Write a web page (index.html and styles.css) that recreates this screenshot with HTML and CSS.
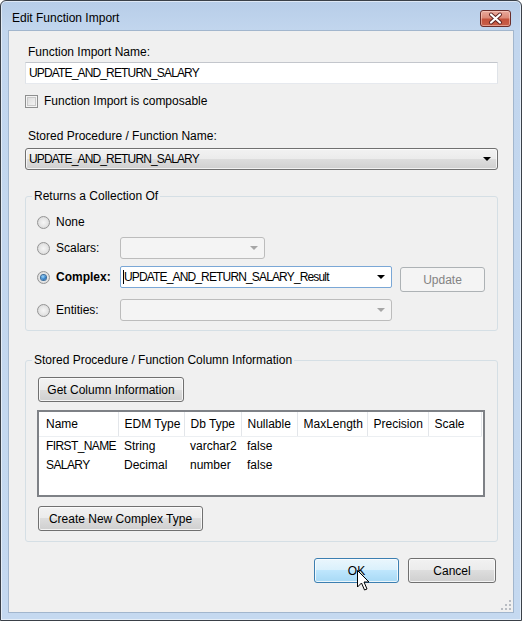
FILE: index.html
```html
<!DOCTYPE html>
<html>
<head>
<meta charset="utf-8">
<title>Edit Function Import</title>
<link rel="stylesheet" href="styles.css">
</head>
<body>
<div class="window">
  <div class="titlebar">
    <span class="title">Edit Function Import</span>
    <span class="close">
      <svg width="31" height="17" viewBox="0 0 31 17">
        <path d="M11 4.5 L20 12.5 M20 4.5 L11 12.5" stroke="#5a2220" stroke-width="4" stroke-linecap="round"/>
        <path d="M11 4.5 L20 12.5 M20 4.5 L11 12.5" stroke="#ffffff" stroke-width="2.2" stroke-linecap="round"/>
      </svg>
    </span>
  </div>
  <div class="panel">
    <div class="label first">Function Import Name:</div>
    <div class="textbox"><span class="caps">UPDATE_AND_RETURN_SALARY</span></div>
    <div class="check-row"><span class="checkbox"></span><span>Function Import is composable</span></div>
    <div class="label second">Stored Procedure / Function Name:</div>
    <div class="combo"><span class="caps">UPDATE_AND_RETURN_SALARY</span><span class="arrow"></span></div>

    <fieldset class="group returns">
      <legend>Returns a Collection Of</legend>
      <div class="radio-grid">
        <div class="opt none"><span class="radio"></span><span>None</span></div>
        <div class="spacer"></div>
        <div class="spacer"></div>

        <div class="opt"><span class="radio"></span><span>Scalars:</span></div>
        <div class="dcombo short"><span class="arrow grey"></span></div>
        <div class="spacer"></div>

        <div class="opt"><span class="radio checked"></span><span class="bold">Complex:</span></div>
        <div class="ecombo"><span class="caret"></span><span class="caps">UPDATE_AND_RETURN_SALARY_Result</span><span class="arrow"></span></div>
        <div class="btn disabled update">Update</div>

        <div class="opt"><span class="radio"></span><span>Entities:</span></div>
        <div class="dcombo"><span class="arrow grey"></span></div>
        <div class="spacer"></div>
      </div>
    </fieldset>

    <fieldset class="group columns">
      <legend>Stored Procedure / Function Column Information</legend>
      <div class="btn get">Get Column Information</div>
      <div class="listview">
        <table>
          <thead>
            <tr>
              <th class="c1">Name</th><th class="c2">EDM Type</th><th class="c3">Db Type</th><th class="c4">Nullable</th><th class="c5">MaxLength</th><th class="c6">Precision</th><th class="c7">Scale</th>
            </tr>
          </thead>
          <tbody>
            <tr><td class="c1"><span class="caps2">FIRST_NAME</span></td><td>String</td><td>varchar2</td><td>false</td><td></td><td></td><td></td></tr>
            <tr><td class="c1"><span class="caps2">SALARY</span></td><td>Decimal</td><td>number</td><td>false</td><td></td><td></td><td></td></tr>
          </tbody>
        </table>
      </div>
      <div class="btn create">Create New Complex Type</div>
    </fieldset>

    <div class="actions">
      <div class="btn ok">OK</div>
      <div class="btn cancel">Cancel</div>
    </div>

    <svg class="grip" width="10" height="10" viewBox="0 0 10 10">
      <g fill="#b8bcc2">
        <rect x="8" y="0" width="2" height="2"/>
        <rect x="4" y="4" width="2" height="2"/><rect x="8" y="4" width="2" height="2"/>
        <rect x="0" y="8" width="2" height="2"/><rect x="4" y="8" width="2" height="2"/><rect x="8" y="8" width="2" height="2"/>
      </g>
    </svg>
  </div>
  <svg class="cursor" width="14" height="22" viewBox="0 0 14 22">
    <path d="M0.5 0.5 L0.5 17 L4.5 13 L7.5 20 L10 19 L7 12 L12 12 Z" fill="#ffffff" stroke="#000000" stroke-width="1" stroke-linejoin="miter"/>
  </svg>
</div>
</body>
</html>
```

FILE: styles.css
```css
* { box-sizing: border-box; }
html, body { margin: 0; padding: 0; }
body {
  width: 522px;
  height: 621px;
  overflow: hidden;
  font-family: "Liberation Sans", Arial, sans-serif;
  font-size: 12px;
  color: #000;
  background: #ffffff;
}

.caps { letter-spacing: -0.85px; }
.caps2 { letter-spacing: -0.6px; }

.window {
  position: relative;
  width: 522px;
  height: 621px;
  border: 1px solid #3a4048;
  border-radius: 6px 6px 0 0;
  background: linear-gradient(#b7cde8 0px, #c2d6ee 30px, #c5d9f0 100%);
  box-shadow: inset 0 0 0 1px rgba(255,255,255,0.55);
  display: flex;
  flex-direction: column;
  padding: 0 7px 7px 7px;
}

.titlebar {
  height: 29px;
  display: flex;
  align-items: flex-start;
  justify-content: space-between;
}
.title {
  margin-top: 10px;
  margin-left: 4px;
  line-height: 15px;
  color: #000;
}
.close {
  margin-top: 9px;
  margin-right: 3px;
  width: 31px;
  height: 17px;
  border: 1px solid #6b2e2b;
  border-radius: 3px;
  background: linear-gradient(#e9a99c 0%, #dc8a78 45%, #c4523c 55%, #c8604a 100%);
  box-shadow: inset 0 0 0 1px rgba(255,220,210,0.5);
  display: flex;
  align-items: center;
  justify-content: center;
}
.close svg { display: block; margin: -1px; }

.panel {
  position: relative;
  flex: 1;
  background: #f0f0f0;
  border: 1px solid #a2b6cd;
  padding: 0 15px 0 16px;
  display: flex;
  flex-direction: column;
}

.label {
  line-height: 15px;
  padding-left: 3px;
}
.label.first { margin-top: 14px; }
.label.second { margin-top: 21px; }

.textbox {
  margin-top: 2px;
  height: 22px;
  background: #fff;
  border: 1px solid;
  border-color: #c3c6cc #dfe3e8 #e6e9ee #dfe3e8;
  line-height: 20px;
  padding-left: 3px;
}

.check-row {
  margin-top: 11px;
  height: 13px;
  display: flex;
  align-items: center;
  gap: 6px;
  line-height: 13px;
}
.checkbox {
  width: 13px;
  height: 13px;
  border: 1px solid #8e8f8f;
  background: linear-gradient(135deg, #d8d8d8, #f8f8f8);
  box-shadow: inset 0 0 0 1px #f4f4f4, inset 0 0 0 2px #c9c9c9;
}

.combo {
  margin-top: 4px;
  height: 22px;
  border: 1px solid #707070;
  border-radius: 3px;
  background: linear-gradient(#f2f2f2 0%, #ebebeb 50%, #dddddd 50%, #cfcfcf 100%);
  box-shadow: inset 0 0 0 1px rgba(255,255,255,0.7);
  display: flex;
  align-items: center;
  justify-content: space-between;
  padding: 0 6px 0 3px;
}
.arrow {
  width: 0;
  height: 0;
  border-left: 4px solid transparent;
  border-right: 4px solid transparent;
  border-top: 4px solid #000;
}
.arrow.grey { border-top-color: #a6a6a6; }

.group {
  margin: 0;
  padding: 0;
  border: 1px solid #d5dfe5;
  border-radius: 3px;
  min-width: 0;
}
.group legend {
  margin-left: 6px;
  padding: 0 2px;
  line-height: 14px;
}
.group.returns { margin-top: 19px; }
.group.columns { margin-top: 21px; display: flex; flex-direction: column; }
.group.columns legend { line-height: 16px; }

.radio-grid {
  display: grid;
  grid-template-columns: 75px 272px 85px;
  column-gap: 8px;
  row-gap: 7px;
  padding: 11px 0 9px 11px;
  align-items: start;
}
.opt {
  height: 22px;
  display: flex;
  align-items: center;
  gap: 6px;
}
.opt.none { height: 16px; }
.bold { font-weight: bold; }
.radio {
  width: 13px;
  height: 13px;
  border-radius: 50%;
  border: 1px solid #949494;
  background: radial-gradient(circle at 50% 50%, #f6f6f6 0%, #e6e6e6 50%, #cfcfcf 100%);
  display: flex;
  align-items: center;
  justify-content: center;
}
.radio.checked::after {
  content: "";
  width: 5px;
  height: 5px;
  border-radius: 50%;
  background: radial-gradient(circle at 40% 35%, #9fd8fb 0%, #2a7ac6 60%, #15457a 100%);
  box-shadow: 0 0 0 1px #3b6e9c;
}
.dcombo {
  height: 22px;
  border: 1px solid #bcbcbc;
  border-radius: 3px;
  background: #f4f4f4;
  display: flex;
  align-items: center;
  justify-content: flex-end;
  padding-right: 6px;
}
.dcombo.short { width: 145px; }
.ecombo {
  height: 22px;
  border: 1px solid #7aa7d6;
  border-radius: 2px;
  background: #fff;
  display: flex;
  align-items: center;
  padding: 0 6px 0 2px;
}
.ecombo .arrow { margin-left: auto; }
.caret {
  width: 1px;
  height: 14px;
  background: #000;
  margin-right: 0;
}

.btn {
  height: 25px;
  border: 1px solid #707070;
  border-radius: 3px;
  background: linear-gradient(#f2f2f2 0%, #ebebeb 50%, #dddddd 50%, #cfcfcf 100%);
  box-shadow: inset 0 0 0 1px rgba(252,252,252,0.8);
  display: flex;
  align-items: center;
  justify-content: center;
}
.btn.disabled {
  border-color: #adb2b5;
  background: #f4f4f4;
  box-shadow: none;
  color: #838383;
}
.btn.update { margin-top: 1px; width: 85px; }
.btn.get { width: 146px; margin: 9px 0 0 12px; }
.btn.create { width: 165px; margin: 9px 0 10px 12px; }

.listview {
  margin: 8px 0 0 11px;
  width: 448px;
  height: 87px;
  background: #fff;
  border: 2px solid #7e8186;
  overflow: hidden;
}
.listview table {
  border-collapse: collapse;
  border-spacing: 0;
  table-layout: fixed;
  width: 442px;
}
.listview th {
  font-weight: normal;
  text-align: left;
  height: 24px;
  padding: 0 0 0 6px;
  border-right: 1px solid #e3e6ea;
  border-bottom: 1px solid #eceff2;
  white-space: nowrap;
  overflow: hidden;
}
.listview td {
  height: 19px;
  padding: 0 0 0 6px;
  white-space: nowrap;
  overflow: hidden;
}
.listview .c1 { width: 79px; padding-left: 7px; }
.c2 { width: 66px; }
.c3 { width: 57px; }
.c4 { width: 56px; }
.c5 { width: 70px; }
.c6 { width: 61px; }
.c7 { width: 53px; }

.actions {
  margin-top: 16px;
  display: flex;
  justify-content: flex-end;
  gap: 9px;
  padding-right: 2px;
}
.btn.ok {
  width: 85px;
  border-color: #3c7fb1;
  background: linear-gradient(#eaf6fd 0%, #d9f0fc 50%, #bee6fd 50%, #a7d9f5 100%);
}
.btn.cancel { width: 88px; }

.grip {
  position: absolute;
  right: 2px;
  bottom: 2px;
}
.cursor {
  position: absolute;
  left: 356px;
  top: 569px;
}
```
